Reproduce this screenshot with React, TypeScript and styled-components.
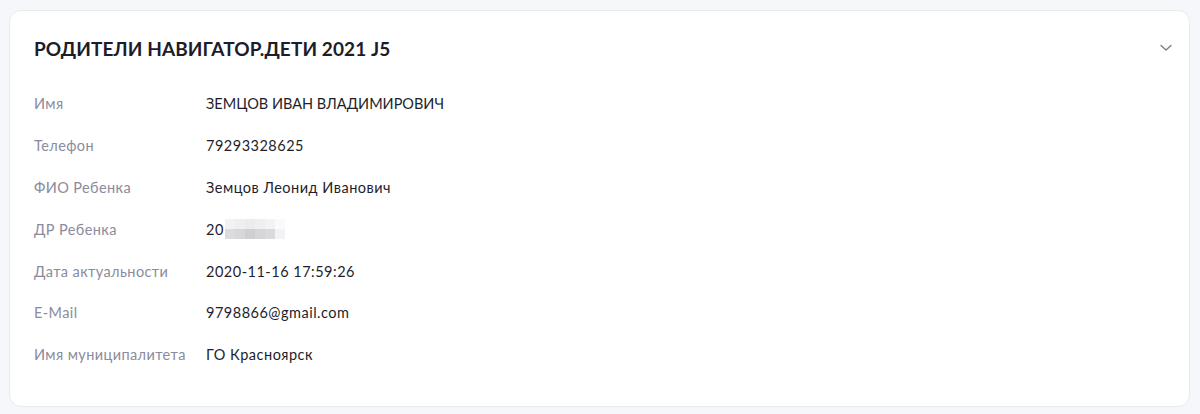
import React from "react";
import styled, { createGlobalStyle } from "styled-components";

const Global = createGlobalStyle`
  html, body { margin: 0; padding: 0; background: #f6f7fb; }
  body { font-family: "Lato", "Open Sans", sans-serif; }
`;

const Page = styled.div`
  padding: 10px 10px 7px 9px;
  box-sizing: border-box;
  width: 1200px;
  height: 414px;
`;

const Card = styled.section`
  background: #ffffff;
  border: 1px solid #e9e9f0;
  border-radius: 12px;
  height: 100%;
  box-sizing: border-box;
  padding: 0 24px 0 24px;
`;

const Header = styled.div`
  display: flex;
  align-items: center;
  justify-content: space-between;
  height: 74px;
`;

const Title = styled.h2`
  margin: 0;
  font-size: 19px;
  font-weight: 700;
  color: #1c1c2a;
  letter-spacing: 0.1px;
`;

const Toggle = styled.button`
  border: 0;
  background: none;
  padding: 0;
  margin-right: -7px;
  display: flex;
  color: #7a7a90;
`;

const List = styled.dl`
  margin: -2px 0 0 0;
  display: grid;
  grid-template-columns: 172px 1fr;
  grid-auto-rows: 41.8px;
`;

const Label = styled.dt`
  font-size: 14.5px;
  letter-spacing: 0.4px;
  color: #8b8b9d;
  display: flex;
  align-items: center;
`;

const Value = styled.dd<{ $caps?: boolean }>`
  margin: 0;
  font-size: 14.5px;
  letter-spacing: ${(p) => (p.$caps ? "0" : "0.5px")};
  color: #1e1e2c;
  display: flex;
  align-items: center;
`;

const Mosaic = styled.svg`
  margin-left: 1px;
  display: block;
`;

const cells = [
  ["#f2f2f4", "#efeff1", "#ececee", "#efeff1", "#f3f3f5", "#fafafc"],
  ["#dcdcdf", "#d7d7da", "#cfcfd2", "#d6d6d9", "#dadadd", "#f3f3f6"],
];

const Blurred = () => (
  <Mosaic width="60" height="20" viewBox="0 0 60 20">
    {cells.map((row, r) =>
      row.map((c, i) => (
        <rect key={`${r}-${i}`} x={i * 10} y={r * 10} width="10" height="10" fill={c} />
      ))
    )}
  </Mosaic>
);

const rows: [string, React.ReactNode, boolean?][] = [
  ["Имя", "ЗЕМЦОВ ИВАН ВЛАДИМИРОВИЧ", true],
  ["Телефон", "79293328625"],
  ["ФИО Ребенка", "Земцов Леонид Иванович"],
  ["ДР Ребенка", <>20<Blurred /></>],
  ["Дата актуальности", "2020-11-16 17:59:26"],
  ["E-Mail", "9798866@gmail.com"],
  ["Имя муниципалитета", "ГО Красноярск"],
];

export default function App() {
  return (
    <>
      <Global />
      <Page>
        <Card>
          <Header>
            <Title>РОДИТЕЛИ НАВИГАТОР.ДЕТИ 2021 J5</Title>
            <Toggle aria-label="toggle">
              <svg width="12" height="8" viewBox="0 0 12 8" fill="none">
                <path d="M1 1.5L6 6L11 1.5" stroke="currentColor" strokeWidth="1.4" strokeLinecap="round" strokeLinejoin="round" />
              </svg>
            </Toggle>
          </Header>
          <List>
            {rows.map(([l, v, caps]) => (
              <React.Fragment key={l}>
                <Label>{l}</Label>
                <Value $caps={caps}>{v}</Value>
              </React.Fragment>
            ))}
          </List>
        </Card>
      </Page>
    </>
  );
}
